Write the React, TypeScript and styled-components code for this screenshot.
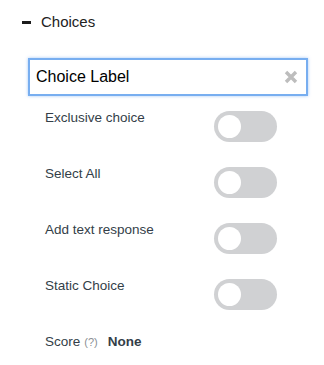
import React, { useState } from 'react';
import styled, { createGlobalStyle } from 'styled-components';

const GlobalStyle = createGlobalStyle`
  body {
    margin: 0;
    background: #fff;
    font-family: "Liberation Sans", Arial, sans-serif;
  }
`;

const Panel = styled.div`
  width: 324px;
  height: 365px;
  overflow: hidden;
`;

const Header = styled.div`
  display: flex;
  align-items: center;
  margin-top: 13px;
  padding-left: 22px;
  height: 18px;
`;

const Minus = styled.span`
  display: inline-block;
  width: 9px;
  height: 3px;
  background: #1c1c1c;
  margin-right: 10px;
`;

const Title = styled.span`
  font-size: 15px;
  line-height: 18px;
  color: #222;
`;

const InputWrap = styled.div`
  position: relative;
  margin: 27px 0 0 28px;
  width: 280px;
  height: 38px;
  box-sizing: border-box;
  border: 2px solid #78aef0;
  box-shadow: 0 0 3px rgba(90, 155, 240, 0.55);
  display: flex;
  align-items: center;
`;

const LabelInput = styled.input`
  flex: 1;
  border: none;
  outline: none;
  padding: 0 0 0 6px;
  font-family: "Liberation Sans", Arial, sans-serif;
  font-size: 16px;
  color: #000;
  background: transparent;
`;

const ClearButton = styled.button`
  border: none;
  background: none;
  padding: 0;
  margin-right: 8px;
  width: 14px;
  height: 14px;
  display: flex;
  cursor: pointer;
`;

const Options = styled.div`
  margin-top: 14px;
`;

const Row = styled.div`
  display: grid;
  grid-template-columns: 169px 63px;
  align-items: start;
  padding-left: 45px;
  height: 56px;
`;

const RowLabel = styled.span`
  font-size: 13.5px;
  line-height: 16px;
  color: #333e48;
`;

const Track = styled.button<{ $on: boolean }>`
  margin-top: 1px;
  width: 63px;
  height: 31px;
  border: none;
  border-radius: 16px;
  padding: 0;
  background: ${p => (p.$on ? '#00bf6f' : '#d0d1d3')};
  position: relative;
  cursor: pointer;
`;

const Knob = styled.span<{ $on: boolean }>`
  position: absolute;
  top: 4px;
  left: ${p => (p.$on ? '36px' : '4px')};
  width: 23px;
  height: 23px;
  border-radius: 50%;
  background: #fff;
`;

const ScoreRow = styled.div`
  display: flex;
  align-items: baseline;
  padding-left: 45px;
  font-size: 13.5px;
  line-height: 16px;
  color: #333e48;
`;

const Hint = styled.span`
  font-size: 11px;
  color: #8a8f94;
  margin: 0 10px 0 4px;
`;

const Value = styled.span`
  font-weight: bold;
`;

const options = ['Exclusive choice', 'Select All', 'Add text response', 'Static Choice'];

const App: React.FC = () => {
  const [label, setLabel] = useState('Choice Label');
  const [on, setOn] = useState<boolean[]>([false, false, false, false]);

  return (
    <Panel>
      <GlobalStyle />
      <Header>
        <Minus />
        <Title>Choices</Title>
      </Header>
      <InputWrap>
        <LabelInput value={label} onChange={e => setLabel(e.target.value)} />
        <ClearButton onClick={() => setLabel('')}>
          <svg width="14" height="14" viewBox="0 0 14 14">
            <path d="M2 2 L12 12 M12 2 L2 12" stroke="#bdbdbd" strokeWidth="3.4" strokeLinecap="butt" />
          </svg>
        </ClearButton>
      </InputWrap>
      <Options>
        {options.map((o, i) => (
          <Row key={o}>
            <RowLabel>{o}</RowLabel>
            <Track $on={on[i]} onClick={() => setOn(on.map((v, j) => (j === i ? !v : v)))}>
              <Knob $on={on[i]} />
            </Track>
          </Row>
        ))}
      </Options>
      <ScoreRow>
        Score<Hint>(?)</Hint><Value>None</Value>
      </ScoreRow>
    </Panel>
  );
};

export default App;
